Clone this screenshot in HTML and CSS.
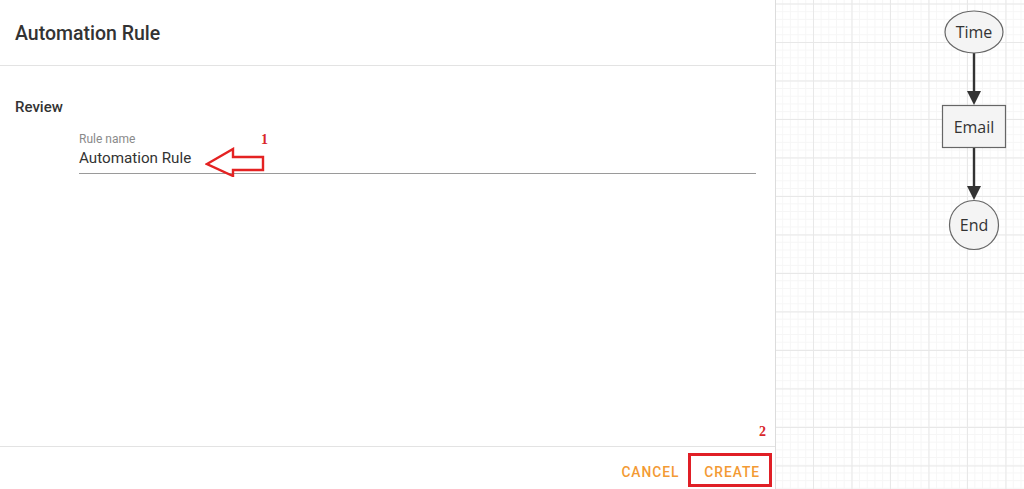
FILE: index.html
```html
<!DOCTYPE html>
<html>
<head>
<meta charset="utf-8">
<link rel="stylesheet" href="styles.css">
</head>
<body>
<div class="app">
  <div class="panel">
    <div class="header"><h1 class="title">Automation Rule</h1></div>
    <div class="content">
      <h2 class="section">Review</h2>
      <div class="field">
        <div class="label">Rule name</div>
        <div class="input">Automation Rule</div>
        <svg class="anno-arrow" width="62" height="30" viewBox="0 0 62 30">
          <path d="M2 17 L28 2 L28 10 L58 10 L58 23 L28 23 L28 29 Z" fill="none" stroke="#e42222" stroke-width="2.4" stroke-linejoin="miter"/>
        </svg>
        <span class="anno-num n1">1</span>
      </div>
    </div>
    <div class="footer">
      <span class="anno-num n2">2</span>
      <button class="btn">CANCEL</button>
      <button class="btn create">CREATE</button>
      <div class="anno-box"></div>
    </div>
  </div>
  <div class="canvas">
    <svg class="diagram" width="248" height="489" viewBox="0 0 248 489">
      <line x1="198" y1="53" x2="198" y2="94" stroke="#333" stroke-width="2.4"/>
      <path d="M191 91 L205 91 L198 105 Z" fill="#333"/>
      <line x1="198" y1="147" x2="198" y2="189" stroke="#333" stroke-width="2.4"/>
      <path d="M191 186 L205 186 L198 200 Z" fill="#333"/>
      <ellipse cx="198" cy="32" rx="29" ry="21" fill="#f4f4f4" stroke="#666" stroke-width="1.2"/>
      <text x="198" y="38" class="node-text">Time</text>
      <rect x="166.5" y="105.5" width="63" height="42" fill="#f4f4f4" stroke="#666" stroke-width="1.2"/>
      <text x="198" y="133" class="node-text">Email</text>
      <circle cx="198" cy="225" r="24.5" fill="#f4f4f4" stroke="#666" stroke-width="1.2"/>
      <text x="198" y="231" class="node-text">End</text>
    </svg>
  </div>
</div>
</body>
</html>
```

FILE: styles.css
```css
html, body {
  margin: 0;
  padding: 0;
  background: #fff;
}
body {
  font-family: Roboto, "Liberation Sans", Arial, sans-serif;
  color: #333;
  width: 1024px;
  height: 489px;
  overflow: hidden;
}
.app {
  display: flex;
  height: 489px;
}
.panel {
  width: 775px;
  border-right: 1px solid #dcdcdc;
  display: flex;
  flex-direction: column;
  flex: none;
}
.header {
  height: 66px;
  border-bottom: 1px solid #e3e3e3;
  display: flex;
  align-items: center;
  padding-left: 15px;
  box-sizing: border-box;
}
.title {
  margin: 0;
  font-size: 19.5px;
  font-weight: 500;
  color: #333;
  padding-top: 2px;
}
.content {
  flex: 1;
  padding: 32px 19px 0 15px;
}
.section {
  margin: 0;
  font-size: 15px;
  font-weight: 500;
  color: #333;
  line-height: 18px;
}
.field {
  position: relative;
  margin: 16px 0 0 64px;
  border-bottom: 1px solid #9a9a9a;
  padding-bottom: 5px;
}
.label {
  font-size: 12px;
  color: #8a8a8a;
  line-height: 14px;
}
.input {
  font-size: 15.2px;
  color: #333;
  line-height: 20px;
  margin-top: 2px;
}
.anno-arrow {
  position: absolute;
  left: 126px;
  top: 15px;
}
.anno-num {
  position: absolute;
  font-family: "Liberation Serif", "DejaVu Serif", serif;
  font-weight: bold;
  font-size: 14px;
  color: #d9262a;
  line-height: 14px;
}
.n1 {
  left: 182px;
  top: 1px;
}
.footer {
  position: relative;
  height: 43px;
  border-top: 1px solid #e3e3e3;
  box-sizing: border-box;
  display: flex;
  justify-content: flex-end;
  align-items: center;
  padding-top: 7px;
}
.btn {
  background: none;
  border: none;
  font-family: Roboto, "Liberation Sans", Arial, sans-serif;
  font-weight: 500;
  font-size: 13.8px;
  letter-spacing: 0.95px;
  color: #f39a34;
  padding: 6px 15px 6px 12px;
  margin: 0;
  line-height: 16px;
}
.create {
  padding-left: 10px;
}
.anno-box {
  position: absolute;
  left: 688px;
  top: 6px;
  width: 78px;
  height: 28px;
  border: 3px solid #e01f26;
}
.n2 {
  left: 759px;
  top: -22px;
}
.canvas {
  flex: 1;
  position: relative;
  background-color: #fff;
  background-image:
    linear-gradient(to right, #e8e8e8 1px, transparent 1px),
    linear-gradient(to bottom, #e8e8e8 1px, transparent 1px),
    linear-gradient(to right, #f6f6f6 1px, transparent 1px),
    linear-gradient(to bottom, #f6f6f6 1px, transparent 1px);
  background-size: 38.5px 38.5px, 38.5px 38.5px, 7.7px 7.7px, 7.7px 7.7px;
  background-position: 37px 3.5px, 37px 3.5px, 6.2px 3.5px, 6.2px 3.5px;
}
.diagram {
  position: absolute;
  left: 0;
  top: 0;
}
.node-text {
  font-family: "Open Sans", "DejaVu Sans", sans-serif;
  font-size: 16px;
  fill: #333;
  text-anchor: middle;
}
```
